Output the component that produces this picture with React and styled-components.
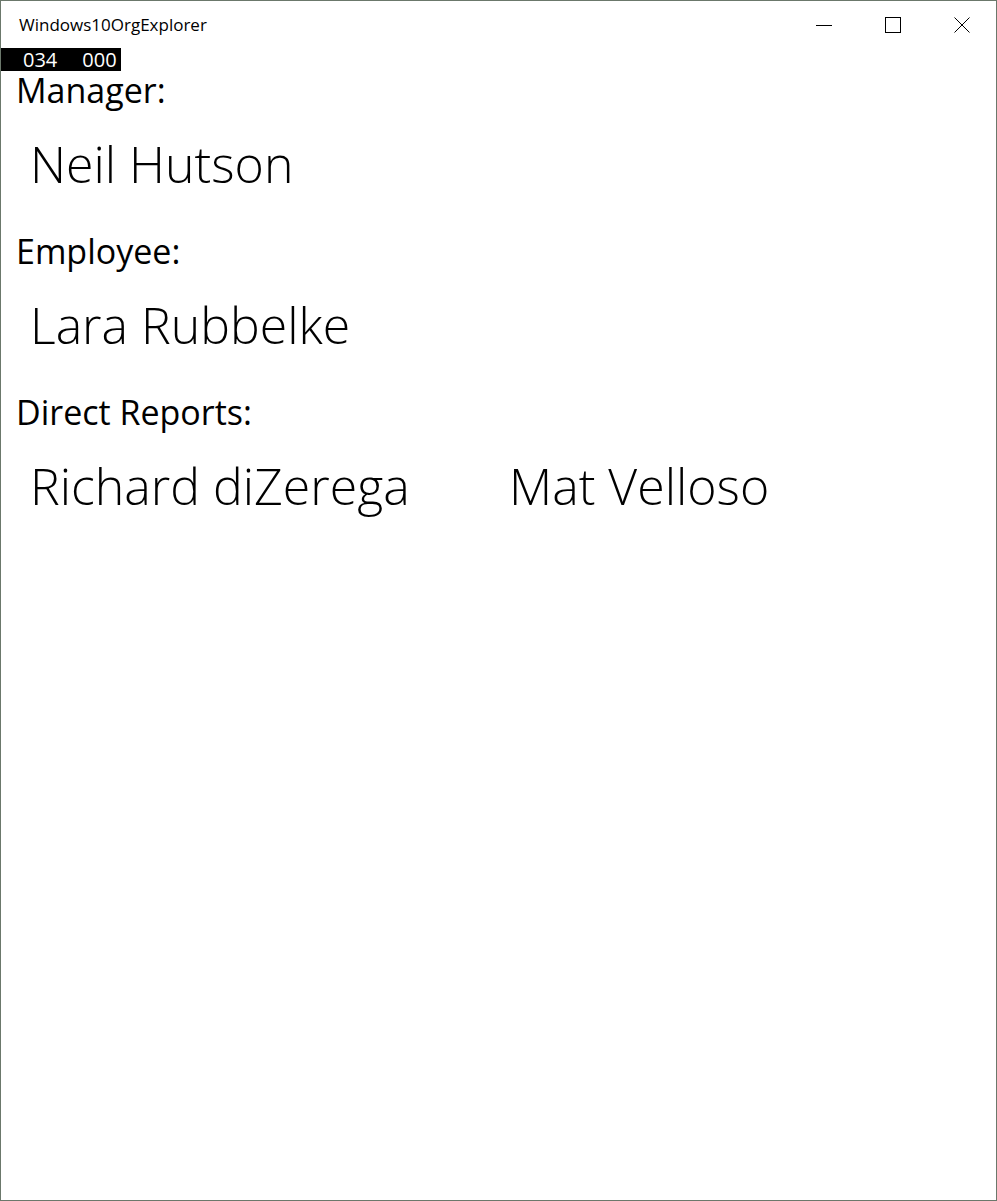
import styled, { createGlobalStyle } from "styled-components";

const GlobalStyle = createGlobalStyle`
  html, body {
    margin: 0;
    padding: 0;
    background: #ffffff;
  }
  body {
    font-family: "Open Sans", "Liberation Sans", sans-serif;
    color: #000000;
  }
`;

const Window = styled.div`
  position: relative;
  width: 997px;
  height: 1201px;
  box-sizing: border-box;
  border: 1px solid #6b786b;
  background: #ffffff;
  display: flex;
  flex-direction: column;
`;

const TitleBar = styled.div`
  height: 47px;
  display: flex;
  align-items: center;
`;

const Title = styled.div`
  flex: 1;
  padding-left: 18px;
  font-size: 17px;
  color: #000;
  padding-bottom: 1px;
`;

const CaptionButton = styled.div`
  width: 69px;
  height: 47px;
  display: flex;
  align-items: center;
  justify-content: center;
`;

/* debug frame-rate counter, drawn over the page */
const FrameCounter = styled.div`
  position: absolute;
  left: 0;
  top: 47px;
  width: 120px;
  height: 23px;
  background: #000;
  color: #fff;
  font-size: 20px;
  line-height: 23px;
  display: flex;
  gap: 25px;
  padding-left: 22px;
  box-sizing: border-box;
`;

const Content = styled.div`
  padding: 24px 15px 0;
`;

const Label = styled.div`
  font-size: 34px;
  line-height: 36px;
  margin-bottom: 16px;
`;

const Name = styled.div`
  font-size: 50px;
  font-weight: 300;
  line-height: 80px;
  padding-left: 14px;
  white-space: nowrap;
`;

const Section = styled.section`
  margin-bottom: 29px;
`;

const Reports = styled.div`
  display: flex;
`;

const ReportItem = styled.div`
  width: 479px;
`;

const MinIcon = () => (
  <svg width="16" height="16" viewBox="0 0 16 16">
    <line x1="0" y1="8.5" x2="16" y2="8.5" stroke="#000" strokeWidth="1" />
  </svg>
);

const MaxIcon = () => (
  <svg width="16" height="16" viewBox="0 0 16 16">
    <rect x="0.5" y="0.5" width="15" height="15" fill="none" stroke="#000" strokeWidth="1" />
  </svg>
);

const CloseIcon = () => (
  <svg width="16" height="16" viewBox="0 0 16 16">
    <path d="M0.5 0.5 L15.5 15.5 M15.5 0.5 L0.5 15.5" stroke="#000" strokeWidth="1" fill="none" />
  </svg>
);

const reports = ["Richard diZerega", "Mat Velloso"];

export default function App() {
  return (
    <>
      <GlobalStyle />
      <Window>
        <TitleBar>
          <Title>Windows10OrgExplorer</Title>
          <CaptionButton>
            <MinIcon />
          </CaptionButton>
          <CaptionButton>
            <MaxIcon />
          </CaptionButton>
          <CaptionButton>
            <CloseIcon />
          </CaptionButton>
        </TitleBar>
        <FrameCounter>
          <span>034</span>
          <span>000</span>
        </FrameCounter>
        <Content>
          <Section>
            <Label>Manager:</Label>
            <Name>Neil Hutson</Name>
          </Section>
          <Section>
            <Label>Employee:</Label>
            <Name>Lara Rubbelke</Name>
          </Section>
          <Section>
            <Label>Direct Reports:</Label>
            <Reports>
              {reports.map((r) => (
                <ReportItem key={r}>
                  <Name>{r}</Name>
                </ReportItem>
              ))}
            </Reports>
          </Section>
        </Content>
      </Window>
    </>
  );
}
